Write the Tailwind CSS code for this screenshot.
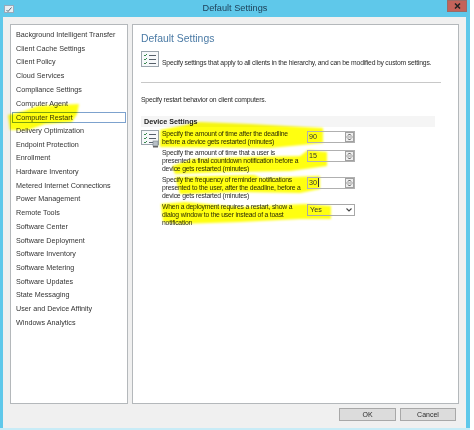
<!DOCTYPE html>
<html lang="en">
<head>
<meta charset="UTF-8" />
<title>Default Settings</title>
<script src="https://cdn.jsdelivr.net/npm/@tailwindcss/browser@4"></script>
</head>
<body class="bg-white overflow-hidden">
<div class="relative w-[474px] h-[430px] overflow-hidden font-['Liberation_Sans',sans-serif] text-[#2b2b2b] blur-[0.35px]">
  <!-- window frame -->
  <div class="w-[470px] h-[430px] bg-[#5fc8ea] flex flex-col pl-[3px] pr-[4px] border-b-2 border-[#c8ecf7]">
    <div class="h-[17px] shrink-0 flex items-start relative">
      <div class="w-[10px] h-[8px] mt-[5px] ml-[1px] bg-[#e8eef2] border border-[#9ab] flex items-center justify-center">
        <svg width="6" height="5" viewBox="0 0 6 5"><path d="M0.5 3 L2 4.5 L5.5 0.5" fill="none" stroke="#567" stroke-width="1"/></svg>
      </div>
      <div class="flex-1 text-center text-[9.2px] leading-[16px] text-[#1c3d55] pl-[9px]">Default Settings</div>
      <div class="w-[20px] h-[12px] bg-[#c4635a] border border-[#9c6b66] flex items-center justify-center mr-[-1px]">
        <svg width="7" height="6" viewBox="0 0 7 6"><path d="M1 0.5 L6 5.5 M6 0.5 L1 5.5" stroke="#222" stroke-width="1.5"/></svg>
      </div>
    </div>
    <div class="flex-1 bg-[#f0f0f0] flex flex-col pt-[7px] px-[7px]">
      <div class="flex gap-[4px] h-[380px]">
        <!-- nav list -->
        <ul class="w-[118px] shrink-0 bg-white border border-[#b4b8bb] pt-[3px] text-[7.2px] leading-[13.7px] text-[#333] whitespace-nowrap">
          <li class="pl-[5px]">Background Intelligent Transfer</li>
          <li class="pl-[5px]">Client Cache Settings</li>
          <li class="pl-[5px]">Client Policy</li>
          <li class="pl-[5px]">Cloud Services</li>
          <li class="pl-[5px]">Compliance Settings</li>
          <li class="pl-[5px]">Computer Agent</li>
          <li class="mx-[1px] pl-[3px] h-[11px] leading-[9.5px] my-[1.35px] border border-[#7da2ce]">Computer Restart</li>
          <li class="pl-[5px]">Delivery Optimization</li>
          <li class="pl-[5px]">Endpoint Protection</li>
          <li class="pl-[5px]">Enrollment</li>
          <li class="pl-[5px]">Hardware Inventory</li>
          <li class="pl-[5px]">Metered Internet Connections</li>
          <li class="pl-[5px]">Power Management</li>
          <li class="pl-[5px]">Remote Tools</li>
          <li class="pl-[5px]">Software Center</li>
          <li class="pl-[5px]">Software Deployment</li>
          <li class="pl-[5px]">Software Inventory</li>
          <li class="pl-[5px]">Software Metering</li>
          <li class="pl-[5px]">Software Updates</li>
          <li class="pl-[5px]">State Messaging</li>
          <li class="pl-[5px]">User and Device Affinity</li>
          <li class="pl-[5px]">Windows Analytics</li>
        </ul>
        <!-- settings pane -->
        <div class="w-[327px] bg-white border border-[#b4b8bb] pl-[8px] pt-[7px]">
          <h1 class="text-[10.4px] leading-[14px] text-[#4a7aa5]">Default Settings</h1>
          <div class="flex items-end gap-[3px] mt-[5px]">
            <svg width="18" height="16" viewBox="0 0 18 16" class="shrink-0">
              <rect x="0.5" y="0.5" width="17" height="15" fill="#f6f8fa" stroke="#9aa4ac"/>
              <path d="M3 4 l1 1 l2 -2 M3 8 l1 1 l2 -2 M3 12 l1 1 l2 -2" fill="none" stroke="#3a8a50"/>
              <path d="M8 4.5 H15 M8 8.5 H15 M8 12.5 H15" stroke="#56606a"/>
            </svg>
            <p class="text-[6.8px] leading-[9px] whitespace-nowrap tracking-[-0.2px]">Specify settings that apply to all clients in the hierarchy, and can be modified by custom settings.</p>
          </div>
          <div class="h-px w-[300px] bg-[#c8c8c8] mt-[15px]"></div>
          <p class="text-[6.8px] leading-[9px] mt-[12px] tracking-[-0.2px]">Specify restart behavior on client computers.</p>
          <div class="w-[294px] h-[11px] mt-[12px] pl-[3px] bg-[#f5f5f5] text-[7.2px] leading-[11px] font-bold text-[#222]">Device Settings</div>
          <!-- rows -->
          <div class="flex mt-[3px]">
            <svg width="18" height="18" viewBox="0 0 18 18" class="shrink-0 mr-[3px]">
              <rect x="0.5" y="0.5" width="17" height="14" fill="#f6f8fa" stroke="#9aa4ac"/>
              <path d="M3 4 l1 1 l2 -2 M3 8 l1 1 l2 -2 M3 12 l1 1 l2 -2" fill="none" stroke="#3a8a50"/>
              <path d="M8 4.5 H15 M8 8.5 H15 M8 12.5 H15" stroke="#56606a"/>
              <rect x="12" y="11" width="5" height="5" fill="#b8c0c6" stroke="#77808a" stroke-width="0.6"/>
              <rect x="12" y="16" width="5" height="1.5" fill="#666"/>
            </svg>
            <div class="w-[146px] text-[6.8px] leading-[8px] tracking-[-0.2px] whitespace-nowrap flex flex-col">
              <p class="h-[19px]">Specify the amount of time after the deadline<br>before a device gets restarted (minutes)</p>
              <p class="h-[27px]">Specify the amount of time that a user is<br>presented a final countdown notification before a<br>device gets restarted (minutes)</p>
              <p class="h-[27px]">Specify the frequency of reminder notifications<br>presented to the user, after the deadline, before a<br>device gets restarted (minutes)</p>
              <p>When a deployment requires a restart, show a<br>dialog window to the user instead of a toast<br>notification</p>
            </div>
          </div>
        </div>
      </div>
      <!-- buttons -->
      <div class="flex justify-end gap-[4px] mt-[4px] pr-[3px]">
        <div class="w-[57px] h-[13px] bg-[#dcdcdc] border border-[#a8a8a8] text-center text-[7px] leading-[11px]">OK</div>
        <div class="w-[56px] h-[13px] bg-[#dcdcdc] border border-[#a8a8a8] text-center text-[7px] leading-[11px]">Cancel</div>
      </div>
    </div>
  </div>

  <!-- marker highlight drawn over the dialog -->
  <svg class="absolute inset-0 mix-blend-multiply pointer-events-none blur-[0.8px]" width="474" height="430" viewBox="0 0 474 430">
    <g fill="#ffff10">
      <path d="M8 115 L24 111 L38 106 L79 104 L77 114 L72 122 L45 124 L28 130 L10 130 Z"/>
      <path d="M160 130 L200 122 L250 124 L323 128 L323 143 L270 148 L160 147 Z"/>
      <path d="M192 159 L250 157 L300 156 L308 150 L327 152 L327 166 L290 171 L230 172 L175 174 L172 166 Z"/>
      <path d="M175 177 L254 175 L262 178 L320 176 L320 189 L300 193 L240 192 L180 194 Z"/>
      <path d="M161 204 L185 202 L240 207 L305 204 L331 206 L331 219 L300 219 L240 222 L180 224 L163 222 Z"/>
    </g>
  </svg>

  <!-- fields sit over the highlight -->
  <div class="absolute left-[307px] top-[131px] w-[48px] flex flex-col text-[7.2px] text-[#333]">
    <div class="flex items-center justify-between h-[12px] border border-[#b0b0b0] mb-[7px] pl-[1px]"><span>90</span>
      <svg width="9" height="10" viewBox="0 0 9 10"><rect x="0.5" y="0.5" width="8" height="9" fill="#eee" stroke="#a0a0a0"/><path d="M0.5 5 H8.5" stroke="#a0a0a0"/><path d="M3 3.5 L4.5 2 L6 3.5 M3 6.5 L4.5 8 L6 6.5" fill="none" stroke="#444"/></svg>
    </div>
    <div class="flex items-center justify-between h-[12px] border border-[#b0b0b0] mb-[15px] pl-[1px]"><span>15</span>
      <svg width="9" height="10" viewBox="0 0 9 10"><rect x="0.5" y="0.5" width="8" height="9" fill="#eee" stroke="#a0a0a0"/><path d="M0.5 5 H8.5" stroke="#a0a0a0"/><path d="M3 3.5 L4.5 2 L6 3.5 M3 6.5 L4.5 8 L6 6.5" fill="none" stroke="#444"/></svg>
    </div>
    <div class="flex items-center justify-between h-[12px] border border-[#b0b0b0] mb-[15px] pl-[1px]"><span><span class="border-r border-[#333] pr-px">30</span></span>
      <svg width="9" height="10" viewBox="0 0 9 10"><rect x="0.5" y="0.5" width="8" height="9" fill="#eee" stroke="#a0a0a0"/><path d="M0.5 5 H8.5" stroke="#a0a0a0"/><path d="M3 3.5 L4.5 2 L6 3.5 M3 6.5 L4.5 8 L6 6.5" fill="none" stroke="#444"/></svg>
    </div>
    <div class="flex items-center justify-between h-[12px] border border-[#a8a8a8] pl-[2px] pr-[2px]"><span>Yes</span>
      <svg width="6" height="4" viewBox="0 0 6 4"><path d="M0.5 0.5 L3 3 L5.5 0.5" fill="none" stroke="#444" stroke-width="1.1"/></svg>
    </div>
  </div>
</div>
</body>
</html>
